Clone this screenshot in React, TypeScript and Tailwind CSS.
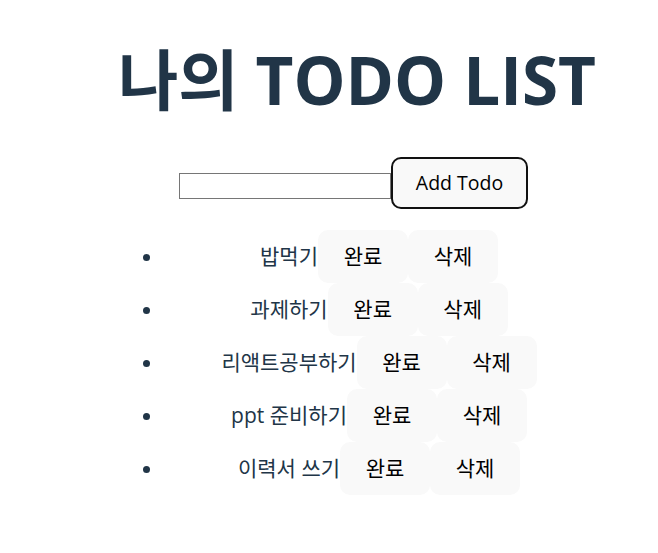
import React from 'react';

const todos = ['밥먹기', '과제하기', '리액트공부하기', 'ppt 준비하기', '이력서 쓰기'];

export default function App() {
  return (
    <div
      className="min-h-[553px] bg-white pl-[54px] text-[#213547]"
      style={{ fontFamily: '"Open Sans", "Noto Sans CJK KR", sans-serif' }}
    >
      <div className="mx-auto w-[476px] pt-[48px] text-center">
        <h1 className="whitespace-nowrap text-[65.5px] font-bold leading-[64px]">나의 TODO LIST</h1>

        {/* Add form */}
        <div className="mt-[45px] flex items-center justify-center pr-[5px]">
          <input
            type="text"
            className="mt-[6px] h-[26px] w-[212px] border border-[#767676] bg-white px-1 text-[13px] outline-none"
          />
          <button className="h-[52px] w-[137px] rounded-[10px] border-2 border-[#111] bg-[#f9f9f9] text-[19.5px] text-black">
            Add Todo
          </button>
        </div>

        {/* List */}
        <ul className="mt-[21px] list-disc pl-[46px] text-[21px] marker:text-[#213547]">
          {todos.map((todo) => (
            <li key={todo}>
              <div className="flex items-baseline justify-center">
                <span className="whitespace-nowrap">{todo}</span>
                <button className="h-[53px] w-[90px] rounded-[10px] border border-transparent bg-[#f9f9f9] text-black">
                  완료
                </button>
                <button className="h-[53px] w-[90px] rounded-[10px] border border-transparent bg-[#f9f9f9] text-black">
                  삭제
                </button>
              </div>
            </li>
          ))}
        </ul>
      </div>
    </div>
  );
}
